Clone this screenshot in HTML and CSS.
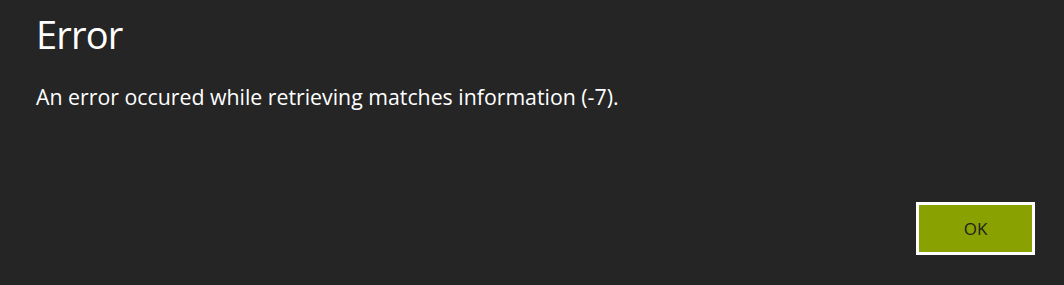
FILE: index.html
```html
<!DOCTYPE html>
<html>
<head>
<meta charset="utf-8">
<link rel="stylesheet" href="styles.css">
</head>
<body>
<div class="dialog">
  <h1 class="title">Error</h1>
  <p class="message">An error occured while retrieving matches information (-7).</p>
  <div class="actions">
    <button class="ok">OK</button>
  </div>
</div>
</body>
</html>
```
FILE: styles.css
```css
html, body {
  margin: 0;
  padding: 0;
  background: #252525;
  width: 1064px;
  height: 285px;
  overflow: hidden;
}
.dialog {
  display: flex;
  flex-direction: column;
  padding: 10px 29px 0 36px;
  font-family: "Open Sans", "Noto Sans", sans-serif;
  color: #ffffff;
}
.title {
  margin: 0;
  font-size: 38px;
  font-weight: 400;
  line-height: 48px;
  letter-spacing: -0.8px;
}
.message {
  margin: 25px 0 0 0;
  font-size: 21.3px;
  line-height: 28px;
}
.actions {
  display: flex;
  justify-content: flex-end;
  margin-top: 91px;
}
.ok {
  width: 119px;
  height: 53px;
  box-sizing: border-box;
  border: 3px solid #ffffff;
  background: #89a101;
  color: #1e1e1e;
  font-family: "Open Sans", "Noto Sans", sans-serif;
  font-size: 17px;
  padding: 0;
  cursor: pointer;
}
```
